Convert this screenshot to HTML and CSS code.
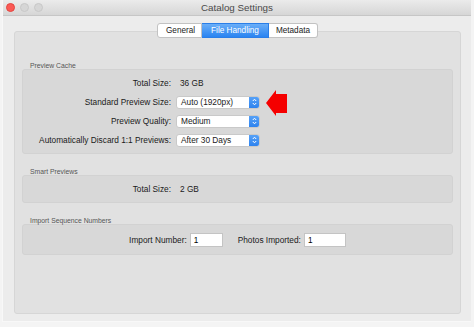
FILE: index.html
```html
<!DOCTYPE html>
<html lang="en">
<head>
  <meta charset="UTF-8">
  <title>Catalog Settings</title>
  <link rel="stylesheet" href="styles.css">
</head>
<body>
  <div class="window">
    <!-- Title bar -->
    <div class="titlebar">
      <div class="lights">
        <span class="light close"></span>
        <span class="light"></span>
        <span class="light"></span>
      </div>
      <div class="title">Catalog Settings</div>
      <div></div>
    </div>

    <div class="content">
      <div class="tabs">
        <button class="tab">General</button>
        <button class="tab active">File Handling</button>
        <button class="tab">Metadata</button>
      </div>

      <div class="panel">
        <!-- Preview Cache -->
        <div class="group-label">Preview Cache</div>
        <div class="group">
          <div class="row">
            <span class="label">Total Size:</span>
            <span class="value">36 GB</span>
          </div>
          <div class="row">
            <span class="label">Standard Preview Size:</span>
            <div class="popup">
              <span>Auto (1920px)</span>
              <span class="stepper"><svg width="5" height="8" viewBox="0 0 5 8"><path d="M0.8 3 L2.5 1.2 L4.2 3 M0.8 5 L2.5 6.8 L4.2 5" fill="none" stroke="#fff" stroke-width="1"/></svg></span>
            </div>
            <svg class="arrow" width="22" height="27" viewBox="0 0 22 27"><polygon points="0,13 10,0 10,4 21,4 21,23 10,23 10,26" fill="#f50000"/></svg>
          </div>
          <div class="row">
            <span class="label">Preview Quality:</span>
            <div class="popup">
              <span>Medium</span>
              <span class="stepper"><svg width="5" height="8" viewBox="0 0 5 8"><path d="M0.8 3 L2.5 1.2 L4.2 3 M0.8 5 L2.5 6.8 L4.2 5" fill="none" stroke="#fff" stroke-width="1"/></svg></span>
            </div>
          </div>
          <div class="row">
            <span class="label">Automatically Discard 1:1 Previews:</span>
            <div class="popup">
              <span>After 30 Days</span>
              <span class="stepper"><svg width="5" height="8" viewBox="0 0 5 8"><path d="M0.8 3 L2.5 1.2 L4.2 3 M0.8 5 L2.5 6.8 L4.2 5" fill="none" stroke="#fff" stroke-width="1"/></svg></span>
            </div>
          </div>
        </div>

        <!-- Smart Previews -->
        <div class="group-label spaced">Smart Previews</div>
        <div class="group">
          <div class="row">
            <span class="label">Total Size:</span>
            <span class="value">2 GB</span>
          </div>
        </div>

        <!-- Import Sequence Numbers -->
        <div class="group-label spaced">Import Sequence Numbers</div>
        <div class="group import">
          <div class="field">
            <span>Import Number:</span>
            <input class="num" type="text" value="1">
          </div>
          <div class="field">
            <span>Photos Imported:</span>
            <input class="num wide" type="text" value="1">
          </div>
        </div>
      </div>
    </div>
  </div>
</body>
</html>
```

FILE: styles.css
```css
/* Reset */
* {
  box-sizing: border-box;
  margin: 0;
  padding: 0;
}
body {
  font-family: "Liberation Sans", Arial, sans-serif;
  font-size: 8.3px;
  color: #1a1a1a;
  background: #f4f4f4;
  width: 474px;
  height: 327px;
  overflow: hidden;
}
/* Window frame */
.window {
  height: 322px;
  margin-left: 2px;
  margin-right: 3px;
  background: #ececec;
  border-left: 1px solid #f8f8f8;
  border-bottom: 1px solid #f8f8f8;
}
.titlebar {
  height: 16px;
  display: grid;
  grid-template-columns: 1fr auto 1fr;
  align-items: center;
  background: linear-gradient(#ebebeb, #d6d6d6);
  border-bottom: 1px solid #c6c6c6;
}
.lights {
  display: flex;
  gap: 5px;
  padding-left: 3px;
}
.light {
  width: 9px;
  height: 9px;
  border-radius: 50%;
  background: #d6d6d6;
  border: 1px solid #c8c8c8;
}
.light.close {
  background: #fb5a55;
  border-color: #e34640;
}
.title {
  font-size: 9.8px;
  color: #4a4a4a;
}
/* Tabs */
.content {
  padding: 7px 10px 0 11px;
}
.tabs {
  display: flex;
  justify-content: center;
  position: relative;
  z-index: 1;
  margin-bottom: -7px;
}
.tab {
  height: 15px;
  font-family: inherit;
  font-size: 8.2px;
  color: #1a1a1a;
  background: #fff;
  border: 1px solid #c2c2c2;
  border-left: none;
  padding: 0 8px;
}
.tab:first-child {
  border-left: 1px solid #c2c2c2;
  border-radius: 3px 0 0 3px;
  padding: 0 6px 0 8px;
}
.tab:last-child {
  border-radius: 0 3px 3px 0;
  padding: 0 7px;
}
.tab.active {
  color: #fff;
  background: linear-gradient(#6aaef8, #2a84f1);
  border-color: #2a7ee8;
  padding: 0 9px;
}
/* Panel and groups */
.panel {
  height: 283px;
  background: #e1e1e1;
  border: 1px solid #d6d6d6;
  border-radius: 3px;
  padding: 30px 7px 0;
}
.group-label {
  font-size: 6.8px;
  line-height: 7px;
  color: #555;
  padding-left: 8px;
}
.group-label.spaced {
  margin-top: 14px;
}
.group {
  background: #d8d8d8;
  border: 1px solid #d2d2d2;
  border-radius: 3px;
  padding: 6px 0;
  display: flex;
  flex-direction: column;
  gap: 5px;
}
.row {
  display: grid;
  grid-template-columns: 148px auto;
  column-gap: 5px;
  align-items: center;
  justify-content: start;
  height: 14px;
  position: relative;
}
.label {
  text-align: right;
  white-space: nowrap;
}
.value {
  padding-left: 4px;
}
/* Popup buttons */
.popup {
  width: 84px;
  height: 13px;
  display: flex;
  align-items: center;
  justify-content: space-between;
  background: #fff;
  border: 1px solid #c9c9c9;
  border-radius: 3px;
  padding-left: 4px;
  overflow: hidden;
}
.stepper {
  width: 11px;
  height: 13px;
  display: flex;
  align-items: center;
  justify-content: center;
  background: linear-gradient(#5aa4f8, #2a80ee);
  border-radius: 0 3px 3px 0;
  margin-right: -1px;
}
.arrow {
  position: absolute;
  left: 243px;
  top: -5px;
}
/* Import fields */
.group.import {
  flex-direction: row;
  justify-content: center;
  gap: 15px;
  padding: 8px 0 7px;
}
.field {
  display: flex;
  align-items: center;
  gap: 3px;
}
.num {
  width: 33px;
  height: 14px;
  font-family: inherit;
  font-size: 8.2px;
  border: 1px solid #c4c4c4;
  background: #fff;
  padding-left: 3px;
  outline: none;
}
.num.wide {
  width: 42px;
}
```
